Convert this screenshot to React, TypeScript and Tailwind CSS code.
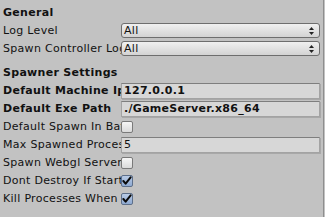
import type { ReactNode } from 'react'

const font = { fontFamily: '"DejaVu Sans", Verdana, sans-serif' }

const Row = ({ label, bold, children }: { label: string; bold?: boolean; children?: ReactNode }) => (
  <div className="flex h-[18px] items-start">
    <div
      className={`w-[121px] shrink-0 overflow-hidden whitespace-nowrap pl-[3px] pr-[2px] text-[11px] leading-[16px] tracking-[0.3px] text-[#111] ${bold ? 'font-bold' : ''}`}
    >
      {label}
    </div>
    <div className="flex-1">{children}</div>
  </div>
)

const Popup = ({ value }: { value: string }) => (
  <div className="flex h-[15px] items-center justify-between rounded-[3px] border border-[#6e6e6e] bg-gradient-to-b from-[#f0f0f0] to-[#d3d3d3] pl-[2px] pr-[5px] text-[11px] leading-[13px] tracking-[0.3px] text-[#111]">
    <span>{value}</span>
    <svg width="5" height="8" viewBox="0 0 5 8">
      <path d="M2.5 0 L5 3 L0 3 Z" fill="#222" />
      <path d="M0 5 L5 5 L2.5 8 Z" fill="#222" />
    </svg>
  </div>
)

const Field = ({ value, bold }: { value: string; bold?: boolean }) => (
  <div
    className={`h-[16px] border border-[#a3a3a3] border-t-[#7e7e7e] bg-[#d7d7d7] pl-[2px] text-[11px] leading-[14px] tracking-[0.3px] text-[#111] shadow-[1px_1px_0_#a8a8a8] ${bold ? 'font-bold' : ''}`}
  >
    {value}
  </div>
)

const Check = ({ checked }: { checked?: boolean }) => (
  <div
    className={`mt-[2px] flex h-[12px] w-[12px] items-center justify-center rounded-[2px] border ${
      checked
        ? 'border-[#5d6f8a] bg-gradient-to-b from-[#b9cbe6] to-[#8ea9d1]'
        : 'border-[#7a7a7a] bg-gradient-to-b from-[#f6f6f6] to-[#dadada]'
    }`}
  >
    {checked && (
      <svg width="11" height="10" viewBox="0 0 11 10">
        <path d="M1.5 5 L4 8 L9.5 1" fill="none" stroke="#0a0a0a" strokeWidth="2.2" strokeLinecap="round" strokeLinejoin="round" />
      </svg>
    )}
  </div>
)

export default function App() {
  return (
    <div className="h-[217px] w-[325px] overflow-hidden bg-[#c2c2c2]" style={font}>
      <div className="mr-[1px] h-full border-r border-[#8e8e8e] pr-[3px] pt-[5px]">
        <Row label="General" bold />
        <Row label="Log Level">
          <Popup value="All" />
        </Row>
        <Row label="Spawn Controller Log Level">
          <Popup value="All" />
        </Row>
        <div className="h-[6px]" />
        <Row label="Spawner Settings" bold />
        <Row label="Default Machine Ip" bold>
          <Field value="127.0.0.1" bold />
        </Row>
        <Row label="Default Exe Path" bold>
          <Field value="./GameServer.x86_64" bold />
        </Row>
        <Row label="Default Spawn In Batchmode">
          <Check />
        </Row>
        <Row label="Max Spawned Processes">
          <Field value="5" />
        </Row>
        <Row label="Spawn Webgl Servers">
          <Check />
        </Row>
        <Row label="Dont Destroy If Started">
          <Check checked />
        </Row>
        <Row label="Kill Processes When App Quits">
          <Check checked />
        </Row>
      </div>
    </div>
  )
}
